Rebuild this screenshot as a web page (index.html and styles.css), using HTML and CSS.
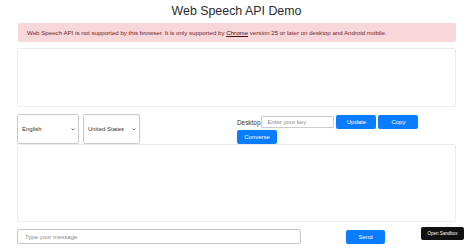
FILE: index.html
```html
<!DOCTYPE html>
<html lang="en">
<head>
  <meta charset="UTF-8">
  <title>Web Speech API Demo</title>
  <link rel="stylesheet" href="styles.css">
</head>
<body>

  <div class="page">
    <h1>Web Speech API Demo</h1>

    <div class="alert">
      Web Speech API is not supported by this browser. It is only supported by <a href="#">Chrome</a> version 25 or later on desktop and Android mobile.
    </div>

    <div class="results"></div>

    <div class="controls">
      <div class="col langs">
        <select class="lang">
          <option>English</option>
        </select>
        <select class="dialect">
          <option>United States</option>
        </select>
      </div>
      <div class="col keys">
        <label for="key">Desktop</label>
        <input type="text" id="key" placeholder="Enter your key">
        <button>Update</button>
        <button>Copy</button>
        <button>Converse</button>
      </div>
    </div>

    <div class="results chat"></div>

    <div class="send-row">
      <input type="text" class="msg" placeholder="Type your message">
      <button class="send">Send</button>
    </div>
  </div>

  <!-- boton flotante del sandbox -->
  <a class="sandbox" href="#">Open Sandbox</a>

</body>
</html>
```

FILE: styles.css
```css
body {
  font-family: "Liberation Sans", Arial, sans-serif;
  background-color: #ffffff;
  margin: 0;
  color: #212529;
}

.page {
  width: 439px;
  margin-left: 17px;
}

h1 {
  margin: 0;
  padding-top: 3px;
  font-size: 12.4px;
  line-height: 16px;
  font-weight: normal;
  text-align: center;
  color: #2a2a2a;
}

.alert {
  margin-top: 4px;
  margin-left: 1px;
  padding: 6px 9px;
  font-size: 6.15px;
  line-height: 7px;
  background-color: #f8d7da;
  color: #721c24;
  border-radius: 2px;
}

.alert a {
  color: #491217;
  text-decoration: underline;
}

.results {
  margin-top: 6px;
  height: 57px;
  border: 1px solid #ececec;
  border-radius: 2px;
}

.controls {
  display: grid;
  grid-template-columns: 219px 220px;
  margin-top: 7px;
}

.langs {
  display: flex;
  gap: 4px;
}

select {
  -webkit-appearance: none;
  appearance: none;
  height: 30px;
  padding: 0 10px 0 4px;
  font-family: inherit;
  font-size: 6px;
  color: #333;
  background-color: #fff;
  background-image: url("data:image/svg+xml;utf8,<svg xmlns='http://www.w3.org/2000/svg' width='4' height='3'><path d='M0.5 0.5 L2 2 L3.5 0.5' fill='none' stroke='%23666' stroke-width='0.9'/></svg>");
  background-repeat: no-repeat;
  background-position: right 3px center;
  border: 1px solid #c9c9c9;
  border-radius: 2px;
}

.lang {
  width: 62px;
}

.dialect {
  width: 57px;
}

.keys {
  display: flex;
  flex-wrap: wrap;
  align-items: center;
  align-content: flex-start;
  column-gap: 2px;
  row-gap: 1px;
  padding-top: 1px;
  padding-left: 1px;
}

.keys label {
  font-size: 6.4px;
  color: #333;
  margin-right: -1px;
}

.keys input {
  width: 73px;
  height: 12px;
  box-sizing: border-box;
  padding: 0 5px;
  font-family: inherit;
  font-size: 6px;
  border: 1px solid #ccc;
  border-radius: 1px;
}

input::placeholder {
  color: #8a8a8a;
}

button {
  width: 40px;
  height: 14px;
  padding: 0;
  background-color: #0a7cff;
  color: white;
  border: none;
  border-radius: 2px;
  font-family: inherit;
  font-size: 6px;
  cursor: pointer;
}

button:hover {
  background-color: #0062cc;
}

.chat {
  margin-top: 0;
  height: 76px;
}

.send-row {
  display: flex;
  align-items: center;
  margin-top: 7px;
}

.msg {
  width: 284px;
  height: 15px;
  box-sizing: border-box;
  padding: 0 7px;
  font-family: inherit;
  font-size: 6px;
  border: 1px solid #c6c6c6;
  border-radius: 2px;
}

.send {
  margin-left: 45px;
  margin-top: 1px;
  width: 39px;
}

.sandbox {
  position: fixed;
  right: 10px;
  bottom: 8px;
  width: 43px;
  height: 13px;
  line-height: 13px;
  text-align: center;
  background-color: #111;
  color: #fff;
  font-size: 4.5px;
  text-decoration: none;
  border-radius: 2px;
}
```
